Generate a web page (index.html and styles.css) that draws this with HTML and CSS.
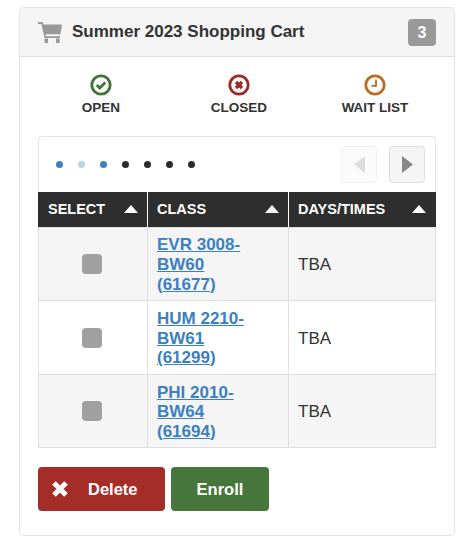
FILE: index.html
```html
<!DOCTYPE html>
<html lang="en">
<head>
    <meta charset="UTF-8">
    <meta name="viewport" content="width=device-width, initial-scale=1.0">
    <title>Shopping Cart</title>
    <link rel="stylesheet" href="styles.css">
</head>
<body>
    <div class="cart-panel">
        <div class="cart-header">
            <svg class="cart-icon" viewBox="0 0 24 21" width="24" height="21">
                <path d="M0 0h4.6l1 2.6H24l-1.6 9.6H7.6l.5 2H22v1.9H6.6L3.3 1.9H0z" fill="#999"/>
                <rect x="6.5" y="16.5" width="3.6" height="4.5" fill="#999"/>
                <rect x="18" y="16.5" width="3.6" height="4.5" fill="#999"/>
            </svg>
            <div class="cart-title">Summer 2023 Shopping Cart</div>
            <div class="cart-badge">3</div>
        </div>
        <div class="cart-body">
            <div class="legend">
                <div class="legend-item">
                    <svg viewBox="0 0 22 22" width="22" height="22">
                        <circle cx="11" cy="11" r="9.2" fill="none" stroke="#3f7537" stroke-width="2.8"/>
                        <path d="M6.8 11l3 3 5.4-5.4" fill="none" stroke="#3f7537" stroke-width="2.8"/>
                    </svg>
                    <span>OPEN</span>
                </div>
                <div class="legend-item">
                    <svg viewBox="0 0 22 22" width="22" height="22">
                        <circle cx="11" cy="11" r="9.2" fill="none" stroke="#9a2a26" stroke-width="2.8"/>
                        <path d="M8 8l6 6M14 8l-6 6" fill="none" stroke="#9a2a26" stroke-width="3.4"/>
                    </svg>
                    <span>CLOSED</span>
                </div>
                <div class="legend-item">
                    <svg viewBox="0 0 22 22" width="22" height="22">
                        <circle cx="11" cy="11" r="9.2" fill="none" stroke="#bd6b1f" stroke-width="2.8"/>
                        <path d="M12 5.5v6.3H7.5" fill="none" stroke="#bd6b1f" stroke-width="1.8"/>
                    </svg>
                    <span>WAIT LIST</span>
                </div>
            </div>
            <div class="results">
                <div class="results-top">
                    <div class="dots">
                        <span class="dot blue"></span>
                        <span class="dot pale"></span>
                        <span class="dot blue"></span>
                        <span class="dot"></span>
                        <span class="dot"></span>
                        <span class="dot"></span>
                        <span class="dot"></span>
                    </div>
                    <div class="pager">
                        <div class="page-btn disabled">
                            <svg viewBox="0 0 11 17" width="11" height="17"><path d="M11 0v17L0 8.5z" fill="#ddd"/></svg>
                        </div>
                        <div class="page-btn">
                            <svg viewBox="0 0 11 17" width="11" height="17"><path d="M0 0v17l11-8.5z" fill="#888"/></svg>
                        </div>
                    </div>
                </div>
                <table class="cart-table">
                    <thead>
                        <tr>
                            <th class="col-select"><div class="th-inner">SELECT<i class="sort-up"></i></div></th>
                            <th class="col-class"><div class="th-inner">CLASS<i class="sort-up"></i></div></th>
                            <th class="col-times"><div class="th-inner">DAYS/TIMES<i class="sort-up"></i></div></th>
                        </tr>
                    </thead>
                    <tbody>
                        <tr class="shaded">
                            <td class="check-cell"><span class="check"></span></td>
                            <td><a href="#">EVR 3008-<br>BW60<br>(61677</a>)</td>
                            <td class="times">TBA</td>
                        </tr>
                        <tr>
                            <td class="check-cell"><span class="check"></span></td>
                            <td><a href="#">HUM 2210-<br>BW61<br>(61299</a>)</td>
                            <td class="times">TBA</td>
                        </tr>
                        <tr class="shaded">
                            <td class="check-cell"><span class="check"></span></td>
                            <td><a href="#">PHI 2010-<br>BW64<br>(61694</a>)</td>
                            <td class="times">TBA</td>
                        </tr>
                    </tbody>
                </table>
            </div>
            <div class="actions">
                <button class="btn btn-delete">
                    <svg viewBox="0 0 18 18" width="18" height="18"><path d="M3 3l12 12M15 3L3 15" stroke="#fff" stroke-width="5" fill="none"/></svg>
                    Delete
                </button>
                <button class="btn btn-enroll">Enroll</button>
            </div>
        </div>
    </div>
</body>
</html>
```

FILE: styles.css
```css
* {
    box-sizing: border-box;
}

body {
    margin: 0;
    padding: 7px 19px 8px;
    background: #fff;
    font-family: "Liberation Sans", Arial, sans-serif;
    color: #333;
}

.cart-panel {
    border: 1px solid #e3e3e3;
    border-radius: 5px;
    background: #fff;
}

.cart-header {
    display: flex;
    align-items: center;
    height: 49px;
    padding: 0 18px;
    background: #f5f5f5;
    border-bottom: 1px solid #ddd;
    border-radius: 5px 5px 0 0;
}

.cart-icon {
    margin-right: 10px;
}

.cart-title {
    flex: 1;
    font-size: 17px;
    font-weight: bold;
}

.cart-badge {
    width: 28px;
    height: 27px;
    line-height: 27px;
    text-align: center;
    background: #999;
    color: #fff;
    font-size: 16px;
    font-weight: bold;
    border-radius: 4px;
}

.cart-body {
    padding: 17px 18px 24px;
}

.legend {
    display: grid;
    grid-template-columns: 126px 150px 122px;
    height: 62px;
}

.legend-item {
    display: flex;
    flex-direction: column;
    align-items: center;
    font-size: 13.5px;
    font-weight: bold;
}

.legend-item span {
    margin-top: 4px;
}

.results {
    border: 1px solid #e3e3e3;
    border-radius: 4px;
    border-bottom: 0;
}

.results-top {
    display: flex;
    align-items: center;
    justify-content: space-between;
    height: 55px;
    padding: 0 10px 0 16.5px;
}

.dots {
    display: flex;
    gap: 14.5px;
}

.dot {
    width: 7.5px;
    height: 7.5px;
    border-radius: 50%;
    background: #2b2b2b;
}

.dot.blue {
    background: #3b80c0;
}

.dot.pale {
    background: #b9d5e6;
}

.pager {
    display: flex;
    gap: 12px;
}

.page-btn {
    display: flex;
    align-items: center;
    justify-content: center;
    width: 36px;
    height: 37px;
    background: #f5f5f5;
    border: 1px solid #ddd;
    border-radius: 4px;
}

.page-btn.disabled {
    background: #fbfbfb;
    border-color: #f1f1f1;
}

.cart-table {
    border-collapse: collapse;
    table-layout: fixed;
    margin-left: -1px;
    width: calc(100% + 2px);
}

.col-select {
    width: 109px;
}

.col-class {
    width: 141px;
}

.cart-table th {
    height: 35px;
    padding: 0 9px;
    background: #2e2e2e;
    color: #fff;
    font-size: 14.5px;
    font-weight: bold;
    text-align: left;
    border-left: 1px solid #fff;
    border-right: 1px solid #fff;
    border-bottom: 1px solid #ddd;
}

.cart-table .col-select {
    border-left-color: #2e2e2e;
}

.cart-table .col-times {
    border-right-color: #2e2e2e;
}

.th-inner {
    display: flex;
    align-items: center;
    justify-content: space-between;
}

.sort-up {
    width: 0;
    height: 0;
    border-left: 7.5px solid transparent;
    border-right: 7.5px solid transparent;
    border-bottom: 8px solid #fff;
}

.cart-table td {
    height: 73.6px;
    padding: 2px 9px 0;
    font-size: 17px;
    font-weight: bold;
    line-height: 19.6px;
    color: #3b80c0;
    border: 1px solid #e0e0e0;
}

.cart-table a {
    color: #3b80c0;
}

.shaded td {
    background: #f5f5f5;
}

.cart-table .times {
    font-weight: normal;
    color: #333;
}

.cart-table .check-cell {
    padding: 0 10px 0 8px;
    text-align: center;
}

.check {
    display: inline-block;
    width: 20px;
    height: 20px;
    background: #a0a0a0;
    border-radius: 4px;
    vertical-align: middle;
}

.actions {
    display: flex;
    gap: 6px;
    margin-top: 19px;
}

.btn {
    display: flex;
    align-items: center;
    height: 44px;
    border: 0;
    border-radius: 4px;
    color: #fff;
    font-family: inherit;
    font-size: 16.5px;
    font-weight: bold;
}

.btn-delete {
    width: 127px;
    padding: 0 0 0 13px;
    background: #a52d28;
    gap: 19px;
}

.btn-enroll {
    width: 98px;
    justify-content: center;
    background: #47763d;
}
```
